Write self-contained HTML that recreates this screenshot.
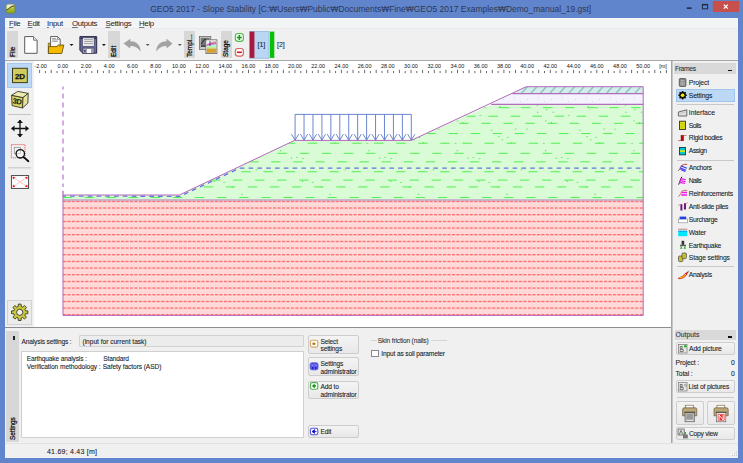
<!DOCTYPE html>
<html><head><meta charset="utf-8">
<style>
*{margin:0;padding:0;box-sizing:border-box}
html,body{width:743px;height:463px;overflow:hidden}
body{position:relative;background:#6185cc;font-family:"Liberation Sans",sans-serif;color:#000}
.a{position:absolute}
.t{position:absolute;white-space:nowrap;line-height:1;-webkit-text-stroke:0.08px currentColor;color:#141a28}
.u{text-decoration:underline;text-decoration-thickness:0.5px;text-underline-offset:0.8px;text-decoration-color:#777}
.tab{position:absolute;background:#d7d7d7}
.vt{position:absolute;white-space:nowrap;line-height:1;-webkit-text-stroke:0.2px currentColor;transform-origin:0 0;transform:rotate(-90deg)}
.btn{position:absolute;border:1px solid #cdcdcd;background:linear-gradient(#f4f4f4,#e8e8e8);border-radius:2px}
.sep{position:absolute;height:1px;background:#c8c8c8}
</style></head><body>

<!-- ===== TITLE BAR ===== -->
<div class="t" style="left:150.2px;top:4.9px;font-size:8.47px;color:#2c3854;-webkit-text-stroke:0">GEO5 2017 - Slope Stability [C:₩Users₩Public₩Documents₩Fine₩GEO5 2017 Examples₩Demo_manual_19.gst]</div>
<svg class="a" style="left:680px;top:0" width="63" height="18" viewBox="680 0 63 18">
<rect x="686.8" y="7.4" width="4.8" height="1.5" fill="#1e2840"/>
<rect x="702.4" y="4.4" width="5.2" height="4.4" fill="none" stroke="#1e2840" stroke-width="1"/>
<rect x="702.4" y="4" width="5.2" height="1.4" fill="#1e2840"/>
<rect x="712.8" y="1" width="26.2" height="11" fill="#c7504c"/>
<path d="M723.8 4.6 L727.8 8.6 M727.8 4.6 L723.8 8.6" stroke="#fff" stroke-width="1.3"/>
</svg>

<!-- ===== CLIENT ===== -->
<div class="a" style="left:5px;top:18px;width:733px;height:440px;background:#f0f0f0"></div>
<!-- menu bar -->
<div class="a" style="left:5px;top:18px;width:733px;height:10.4px;background:#f3f4f6;border-top:1px solid #f6f6f6"></div>
<div class="a" style="left:5px;top:28.4px;width:733px;height:1px;background:#ebebeb"></div>
<div class="t" style="left:9px;top:20.2px;font-size:7.8px;letter-spacing:-0.3px;-webkit-text-stroke:0;color:#1c1c1c"><span class="u">F</span>ile</div>
<div class="t" style="left:27.5px;top:20.2px;font-size:7.8px;letter-spacing:-0.3px;-webkit-text-stroke:0;color:#1c1c1c"><span class="u">E</span>dit</div>
<div class="t" style="left:47px;top:20.2px;font-size:7.8px;letter-spacing:-0.3px;-webkit-text-stroke:0;color:#1c1c1c"><span class="u">I</span>nput</div>
<div class="t" style="left:72px;top:20.2px;font-size:7.8px;letter-spacing:-0.3px;-webkit-text-stroke:0;color:#1c1c1c"><span class="u">O</span>utputs</div>
<div class="t" style="left:105.5px;top:20.2px;font-size:7.8px;letter-spacing:-0.3px;-webkit-text-stroke:0;color:#1c1c1c"><span class="u">S</span>ettings</div>
<div class="t" style="left:139px;top:20.2px;font-size:7.8px;letter-spacing:-0.3px;-webkit-text-stroke:0;color:#1c1c1c"><span class="u">H</span>elp</div>

<!-- toolbar -->
<div class="a" style="left:5px;top:60px;width:733px;height:1px;background:#a8a8a8"></div>
<div class="tab" style="left:6.5px;top:31px;width:11.5px;height:27px"></div>
<div class="vt" style="left:9.5px;top:57px;font-size:6.5px">File</div>
<div class="tab" style="left:108px;top:31px;width:11.5px;height:27px"></div>
<div class="vt" style="left:111px;top:57px;font-size:6.5px">Edit</div>
<div class="tab" style="left:184px;top:31px;width:11px;height:27px"></div>
<div class="vt" style="left:186.5px;top:57px;font-size:6.5px">Templ...</div>
<div class="tab" style="left:220.5px;top:31px;width:11.5px;height:27px"></div>
<div class="vt" style="left:223px;top:57px;font-size:6.5px">Stage</div>

<svg class="a" style="left:0;top:0" width="743" height="61" viewBox="0 0 743 61">
  <!-- app icon -->
  <defs><linearGradient id="ag" x1="0" y1="0" x2="0" y2="1"><stop offset="0" stop-color="#d8e050"/><stop offset="1" stop-color="#88a020"/></linearGradient></defs>
  <rect x="6.2" y="4.3" width="8.6" height="9" rx="2" fill="url(#ag)" stroke="#6a8028" stroke-width="0.6"/>
  <path d="M6.6 9.6 C9 9.2 10 5.8 14.4 5.6 V4.8 Q14.4 4.6 13 4.6 H8 Q6.6 4.6 6.6 6Z" fill="#ecead8"/>
  <path d="M6.6 9.8 C9 9.4 10 6 14.4 5.8" fill="none" stroke="#2a2a1a" stroke-width="0.9"/>
  <!-- new doc -->
  <path d="M24.7 36.6 H33.5 L37.1 40.2 V53.3 H24.7 Z" fill="#fff" stroke="#5a5a5a" stroke-width="1"/>
  <path d="M33.5 36.6 V40.2 H37.1" fill="#eee" stroke="#5a5a5a" stroke-width="0.8"/>
  <!-- open folder -->
  <path d="M48.3 43.2 H50.5 V53.5 H48.3Z" fill="#f0b400" stroke="#5a4a10" stroke-width="0.7"/>
  <path d="M50.6 36.5 H57.5 L60.2 39.3 V47.5 H50.6Z" fill="#fafafa" stroke="#555" stroke-width="0.9"/>
  <path d="M57.5 36.5 V39.3 H60.2" fill="none" stroke="#555" stroke-width="0.6"/>
  <path d="M52.2 38.5 H56 M52.2 39.9 H57.5 M52.2 41.4 H57.8" stroke="#888" stroke-width="0.8"/>
  <path d="M48.6 46.6 H57 L58 45 H63.8 L61.8 53.5 H48.4Z" fill="#f6bb00" stroke="#5a4a10" stroke-width="0.8"/>
  <path d="M59 46 H62.5" stroke="#a08030" stroke-width="0.8"/>
  <path d="M69.6 43.9 H73.5 L71.55 46Z" fill="#111"/>
  <!-- floppy -->
  <path d="M79.9 36.6 H96.7 V53.2 H82.8 L79.9 50.3Z" fill="#6b6b9c" stroke="#2a2a44" stroke-width="1"/>
  <rect x="82.7" y="37.9" width="11.4" height="8.3" fill="#f0f0f0" stroke="#3a3a50" stroke-width="0.5"/>
  <path d="M84 39.7 H93 M84 41.6 H93 M84 43.6 H93" stroke="#8a8a8a" stroke-width="0.8"/>
  <rect x="82.7" y="48" width="11.4" height="5.2" fill="#9a9ab0" stroke="#3a3a50" stroke-width="0.5"/>
  <rect x="86.9" y="49" width="4.1" height="4" fill="#fafafa"/>
  <circle cx="84.8" cy="51" r="1.1" fill="#50507a"/>
  <circle cx="81.6" cy="38.3" r="0.7" fill="#111"/>
  <circle cx="95.3" cy="38.3" r="0.7" fill="#111"/>
  <path d="M102 43.9 H105.8 L103.9 46Z" fill="#111"/>
  <!-- undo -->
  <path d="M123.6 43.6 L130.3 38.7 V41.3 C136 41.3 140.5 44.5 140.7 51.7 C138.5 47.8 135 46 130.3 46 V48.6 Z" fill="#a2a2a2"/>
  <path d="M145.7 43.9 H149.7 L147.7 46Z" fill="#5a5a5a"/>
  <!-- redo -->
  <path d="M172.5 43.6 L166.5 38.7 V41.3 C160.8 41.3 156.4 44.5 156.2 51.7 C158.4 47.8 161.8 46 166.5 46 V48.6 Z" fill="#a2a2a2"/>
  <path d="M177.9 43.9 H181.8 L179.85 46Z" fill="#5a5a5a"/>
  <!-- template -->
  <rect x="199.4" y="36.5" width="11.4" height="13" fill="#d8d8d8" stroke="#6a6a6a" stroke-width="0.8"/>
  <rect x="200.6" y="37.7" width="9" height="10.6" fill="#777"/>
  <path d="M201 44 L205 39 L208 41 M201 46 H208" stroke="#222" stroke-width="1" fill="none"/>
  <rect x="201" y="47.3" width="8" height="1" fill="#eee"/>
  <rect x="205.9" y="39.8" width="11" height="13.8" fill="#f4f4f4" stroke="#6a6a6a" stroke-width="0.8"/>
  <path d="M206.6 41 H216.2 V44 L211 46 L206.6 44.5Z" fill="#f0f0f0"/>
  <path d="M206.6 44.5 L211 42.5 L216.2 41.5 V45 L206.6 46Z" fill="#d860c8"/>
  <path d="M206.6 46 L211 45 L216.2 44 V46.5 H206.6Z" fill="#b0f0e8"/>
  <path d="M210 41 V46" stroke="#333" stroke-width="0.8"/>
  <path d="M213 41 L214.5 43.5" stroke="#e8d000" stroke-width="1"/>
  <rect x="206.6" y="46.5" width="9.6" height="2" fill="#b8f090"/>
  <rect x="206.6" y="48.5" width="9.6" height="4.4" fill="#d4a030"/>
  <!-- plus/minus -->
  <rect x="235.3" y="33.5" width="8.1" height="7.9" rx="2.6" fill="#f4fbf4" stroke="#4cbc4c" stroke-width="1.1"/>
  <path d="M236.9 37.45 H241.8 M239.35 35 V39.9" stroke="#14a014" stroke-width="1.6"/>
  <rect x="235.3" y="48.5" width="8.1" height="7.6" rx="2.6" fill="#fdf6f6" stroke="#d06464" stroke-width="1.1"/>
  <path d="M236.9 52.3 H241.8" stroke="#c82020" stroke-width="1.6"/>
  <!-- stage buttons -->
  <rect x="249.5" y="31.5" width="19.5" height="26.8" fill="#b9d6f2" stroke="#9cc0e6" stroke-width="1"/>
  <rect x="249.7" y="31.6" width="4.7" height="26.3" fill="#a9183e"/>
  <rect x="269.9" y="31.6" width="4.4" height="26.3" fill="#08c008"/>
</svg>
<div class="t" style="left:257.5px;top:40.7px;font-size:7px">[1]</div>
<div class="t" style="left:277px;top:40.7px;font-size:7px">[2]</div>

<!-- left toolbar -->
<div class="a" style="left:7px;top:63px;width:25px;height:24.5px;background:#bcd8f4;border:1px solid #a4c8ee"></div>
<svg class="a" style="left:0;top:61px" width="33" height="266" viewBox="0 61 33 266">
  <!-- 2D -->
  <rect x="12.5" y="68.3" width="14.8" height="14.3" fill="#cfcb5c" stroke="#3c3a20" stroke-width="1"/>
  <text x="20" y="78.8" font-family="Liberation Sans" font-weight="bold" font-size="8" text-anchor="middle" fill="#111" stroke="#111" stroke-width="0.25" letter-spacing="-0.1">2D</text>
  <!-- 3D cube -->
  <path d="M11.6 95.3 L23 97.6 L22.5 108 L12.1 105.6Z" fill="#d8d466" stroke="#3a3a22" stroke-width="0.9" stroke-linejoin="round"/>
  <path d="M11.6 95.3 L17.8 91.4 L28.2 93.4 L23 97.6Z" fill="#ececb4" stroke="#3a3a22" stroke-width="0.9" stroke-linejoin="round"/>
  <path d="M23 97.6 L28.2 93.4 L27.9 103 L22.5 108Z" fill="#e6e49c" stroke="#3a3a22" stroke-width="0.9" stroke-linejoin="round"/>
  <text x="17.1" y="104" font-family="Liberation Sans" font-weight="bold" font-size="7.6" text-anchor="middle" fill="#111" letter-spacing="-0.4" transform="rotate(8 17 101)">3D</text>
  <path d="M8 114.5 H31" stroke="#c4c4c4" stroke-width="1"/>
  <!-- move -->
  <path d="M20 120 V137 M11.5 128.5 H28.5" stroke="#111" stroke-width="1.3"/>
  <path d="M17 123 L20 119.8 L23 123Z M17 134 L20 137.2 L23 134Z M14.5 125.5 L11.3 128.5 L14.5 131.5Z M25.5 125.5 L28.7 128.5 L25.5 131.5Z" fill="#111"/>
  <!-- zoom -->
  <rect x="11.4" y="144.6" width="13.6" height="13.3" fill="none" stroke="#f03c3c" stroke-width="0.9" stroke-dasharray="1.1 0.9"/>
  <rect x="14.3" y="147.6" width="6" height="6" fill="#f4f4f4" stroke="#8a8a8a" stroke-width="0.7"/>
  <circle cx="20.3" cy="153.8" r="4.2" fill="#fff" fill-opacity="0.35" stroke="#111" stroke-width="1.3"/>
  <path d="M23.4 156.9 L28.4 161.2" stroke="#111" stroke-width="1.9" stroke-linecap="round"/>
  <path d="M8 167.8 H31" stroke="#c4c4c4" stroke-width="1"/>
  <!-- fit -->
  <rect x="11.4" y="175.6" width="17.2" height="12.8" fill="#fff" stroke="#3a3a3a" stroke-width="0.9"/>
  <path d="M13.5 177.5 L26.7 186.5 M26.7 177.5 L13.5 186.5" stroke="#f07070" stroke-width="0.7" stroke-dasharray="1 0.8"/>
  <path d="M12.6 176.8 L15.4 177.2 L13 179.4Z M27.6 176.8 L24.8 177.2 L27.2 179.4Z M12.6 187.2 L15.4 186.8 L13 184.6Z M27.6 187.2 L24.8 186.8 L27.2 184.6Z" fill="#f01818"/>
  <!-- gear button -->
  <rect x="7.5" y="300.5" width="24" height="24" fill="#ececec" stroke="#d2d2d2" stroke-width="1"/>
  <g transform="translate(19.7 312.3)">
    <path id="gear" d="M-1.54 -5.80 L-1.40 -8.18 L1.40 -8.18 L1.54 -5.80 L3.01 -5.19 L4.79 -6.78 L6.78 -4.79 L5.19 -3.01 L5.80 -1.54 L8.18 -1.40 L8.18 1.40 L5.80 1.54 L5.19 3.01 L6.78 4.79 L4.79 6.78 L3.01 5.19 L1.54 5.80 L1.40 8.18 L-1.40 8.18 L-1.54 5.80 L-3.01 5.19 L-4.79 6.78 L-6.78 4.79 L-5.19 3.01 L-5.80 1.54 L-8.18 1.40 L-8.18 -1.40 L-5.80 -1.54 L-5.19 -3.01 L-6.78 -4.79 L-4.79 -6.78 L-3.01 -5.19Z" stroke-linejoin="round" fill="#c8c840" stroke="#3a3a20" stroke-width="0.9"/>
    <circle r="3.1" fill="#f0f0f0" stroke="#3a3a20" stroke-width="0.9"/>
  </g>
</svg>

<!-- ===== CHART ===== -->
<div class="a" style="left:34px;top:61px;width:637px;height:266px;background:#fff"></div>
<svg class="a" style="left:33px;top:61px" width="638" height="266" viewBox="33 61 638 266">
  <defs>
    <pattern id="pk" patternUnits="userSpaceOnUse" x="62.9" y="200.8" width="4.4716" height="6.67">
      <rect x="0" y="0" width="3.1" height="1.4" fill="#ff5c5c"/>
      <rect x="0" y="1.6" width="3.1" height="0.8" fill="#ffeded"/>
    </pattern>
    <pattern id="gr" patternUnits="userSpaceOnUse" x="540" y="100" width="22.08" height="100"><rect x="3.00" y="7.10" width="9.3" height="1.05" fill="#55f055"/><rect x="14.70" y="15.70" width="9.3" height="1.05" fill="#55f055"/><rect x="-7.38" y="15.70" width="9.3" height="1.05" fill="#55f055"/><rect x="7.60" y="22.80" width="9.3" height="1.05" fill="#55f055"/><rect x="19.00" y="33.00" width="9.3" height="1.05" fill="#55f055"/><rect x="-3.08" y="33.00" width="9.3" height="1.05" fill="#55f055"/><rect x="10.80" y="42.70" width="9.3" height="1.05" fill="#55f055"/><rect x="2.60" y="52.80" width="9.3" height="1.05" fill="#55f055"/><rect x="18.30" y="61.30" width="9.3" height="1.05" fill="#55f055"/><rect x="-3.78" y="61.30" width="9.3" height="1.05" fill="#55f055"/><rect x="10.50" y="71.20" width="9.3" height="1.05" fill="#55f055"/><rect x="2.10" y="79.60" width="9.3" height="1.05" fill="#55f055"/><rect x="17.00" y="86.40" width="9.3" height="1.05" fill="#55f055"/><rect x="-5.08" y="86.40" width="9.3" height="1.05" fill="#55f055"/><rect x="8.30" y="97.00" width="9.3" height="1.05" fill="#55f055"/></pattern>
    <pattern id="gd" patternUnits="userSpaceOnUse" x="540" y="100" width="88.3" height="100"><rect x="28.2" y="14.9" width="1.1" height="1.1" fill="#44e044"/><rect x="56.6" y="7.2" width="1.1" height="1.1" fill="#44e044"/><rect x="46.6" y="36.2" width="1.1" height="1.1" fill="#44e044"/><rect x="5.0" y="50.2" width="1.1" height="1.1" fill="#44e044"/><rect x="3.3" y="42.9" width="1.1" height="1.1" fill="#44e044"/><rect x="6.1" y="9.0" width="1.1" height="1.1" fill="#44e044"/><rect x="36.9" y="81.9" width="1.1" height="1.1" fill="#44e044"/><rect x="10.8" y="22.1" width="1.1" height="1.1" fill="#44e044"/><rect x="54.6" y="93.8" width="1.1" height="1.1" fill="#44e044"/><rect x="50.2" y="39.3" width="1.1" height="1.1" fill="#44e044"/><rect x="84.9" y="4.6" width="1.1" height="1.1" fill="#44e044"/><rect x="74.7" y="28.7" width="1.1" height="1.1" fill="#44e044"/><rect x="12.6" y="11.7" width="1.1" height="1.1" fill="#44e044"/><rect x="26.8" y="80.8" width="1.1" height="1.1" fill="#44e044"/><rect x="15.7" y="57.6" width="1.1" height="1.1" fill="#44e044"/><rect x="55.6" y="36.9" width="1.1" height="1.1" fill="#44e044"/><rect x="47.7" y="6.2" width="1.1" height="1.1" fill="#44e044"/><rect x="5.2" y="20.4" width="1.1" height="1.1" fill="#44e044"/><rect x="59.2" y="42.3" width="1.1" height="1.1" fill="#44e044"/><rect x="27.3" y="58.0" width="1.1" height="1.1" fill="#44e044"/><rect x="39.4" y="29.7" width="1.1" height="1.1" fill="#44e044"/><rect x="69.1" y="69.2" width="1.1" height="1.1" fill="#44e044"/><rect x="21.2" y="56.9" width="1.1" height="1.1" fill="#44e044"/><rect x="45.7" y="86.6" width="1.1" height="1.1" fill="#44e044"/><rect x="63.5" y="28.5" width="1.1" height="1.1" fill="#44e044"/><rect x="85.3" y="11.7" width="1.1" height="1.1" fill="#44e044"/></pattern>
    <pattern id="cy" patternUnits="userSpaceOnUse" x="521.3" y="86.7" width="9.45" height="6.9">
      <path d="M-0.5 7.4 L6.5 -0.5" stroke="#2e9494" stroke-width="0.9"/>
    </pattern>
    <pattern id="lv" patternUnits="userSpaceOnUse" x="500" y="94" width="24" height="10">
      <rect x="3" y="5" width="0.9" height="0.9" fill="#ccccf4"/>
      <rect x="14" y="3" width="0.9" height="0.9" fill="#ccccf4"/>
      <rect x="20" y="7" width="0.9" height="0.9" fill="#d0d0f4"/>
    </pattern>
  </defs>
  <!-- ruler -->
  <g font-family="Liberation Sans" font-size="5.5" fill="#111" text-anchor="middle" id="rl"><text x="40.6" y="67.6">-2.00</text><text x="62.8" y="67.6">0.00</text><text x="86.0" y="67.6">2.00</text><text x="109.2" y="67.6">4.00</text><text x="132.4" y="67.6">6.00</text><text x="155.7" y="67.6">8.00</text><text x="178.9" y="67.6">10.00</text><text x="202.1" y="67.6">12.00</text><text x="225.3" y="67.6">14.00</text><text x="248.5" y="67.6">16.00</text><text x="271.7" y="67.6">18.00</text><text x="295.0" y="67.6">20.00</text><text x="318.2" y="67.6">22.00</text><text x="341.4" y="67.6">24.00</text><text x="364.6" y="67.6">26.00</text><text x="387.8" y="67.6">28.00</text><text x="411.0" y="67.6">30.00</text><text x="434.3" y="67.6">32.00</text><text x="457.5" y="67.6">34.00</text><text x="480.7" y="67.6">36.00</text><text x="503.9" y="67.6">38.00</text><text x="527.1" y="67.6">40.00</text><text x="550.3" y="67.6">42.00</text><text x="573.6" y="67.6">44.00</text><text x="596.8" y="67.6">46.00</text><text x="620.0" y="67.6">48.00</text><text x="643.2" y="67.6">50.00</text><text x="663" y="67.6">[m]</text></g>
  <g id="ticks" stroke="#444" stroke-width="0.8"><path d="M39.6 69.8V73.1M45.4 71V73.1M51.2 69.8V73.1M57.0 71V73.1M62.8 69.8V73.1M68.6 71V73.1M74.4 69.8V73.1M80.2 71V73.1M86.0 69.8V73.1M91.8 71V73.1M97.6 69.8V73.1M103.4 71V73.1M109.2 69.8V73.1M115.0 71V73.1M120.8 69.8V73.1M126.6 71V73.1M132.4 69.8V73.1M138.3 71V73.1M144.1 69.8V73.1M149.9 71V73.1M155.7 69.8V73.1M161.5 71V73.1M167.3 69.8V73.1M173.1 71V73.1M178.9 69.8V73.1M184.7 71V73.1M190.5 69.8V73.1M196.3 71V73.1M202.1 69.8V73.1M207.9 71V73.1M213.7 69.8V73.1M219.5 71V73.1M225.3 69.8V73.1M231.1 71V73.1M236.9 69.8V73.1M242.7 71V73.1M248.5 69.8V73.1M254.3 71V73.1M260.1 69.8V73.1M265.9 71V73.1M271.7 69.8V73.1M277.5 71V73.1M283.4 69.8V73.1M289.2 71V73.1M295.0 69.8V73.1M300.8 71V73.1M306.6 69.8V73.1M312.4 71V73.1M318.2 69.8V73.1M324.0 71V73.1M329.8 69.8V73.1M335.6 71V73.1M341.4 69.8V73.1M347.2 71V73.1M353.0 69.8V73.1M358.8 71V73.1M364.6 69.8V73.1M370.4 71V73.1M376.2 69.8V73.1M382.0 71V73.1M387.8 69.8V73.1M393.6 71V73.1M399.4 69.8V73.1M405.2 71V73.1M411.0 69.8V73.1M416.8 71V73.1M422.6 69.8V73.1M428.5 71V73.1M434.3 69.8V73.1M440.1 71V73.1M445.9 69.8V73.1M451.7 71V73.1M457.5 69.8V73.1M463.3 71V73.1M469.1 69.8V73.1M474.9 71V73.1M480.7 69.8V73.1M486.5 71V73.1M492.3 69.8V73.1M498.1 71V73.1M503.9 69.8V73.1M509.7 71V73.1M515.5 69.8V73.1M521.3 71V73.1M527.1 69.8V73.1M532.9 71V73.1M538.7 69.8V73.1M544.5 71V73.1M550.3 69.8V73.1M556.1 71V73.1M561.9 69.8V73.1M567.7 71V73.1M573.6 69.8V73.1M579.4 71V73.1M585.2 69.8V73.1M591.0 71V73.1M596.8 69.8V73.1M602.6 71V73.1M608.4 69.8V73.1M614.2 71V73.1M620.0 69.8V73.1M625.8 71V73.1M631.6 69.8V73.1M637.4 71V73.1M643.2 69.8V73.1M649.0 71V73.1M654.8 69.8V73.1M660.6 71V73.1M666.4 69.8V73.1"/></g>
  <!-- layers -->
  <rect x="62.8" y="200" width="580.4" height="115.5" fill="#ffd8d8"/>
  <rect x="62.8" y="200" width="580.4" height="115.5" fill="url(#pk)"/>
  <path d="M62.8 195 L179.4 195 L294.6 140.4 L411.3 140.4 L491.2 104.4 L643.2 104.4 L643.2 200 L62.8 200Z" fill="#d9fbd6"/>
  <path d="M62.8 195 L179.4 195 L294.6 140.4 L411.3 140.4 L491.2 104.4 L643.2 104.4 L643.2 200 L62.8 200Z" fill="url(#gr)"/>
  <path d="M62.8 195 L179.4 195 L294.6 140.4 L411.3 140.4 L491.2 104.4 L643.2 104.4 L643.2 200 L62.8 200Z" fill="url(#gd)"/>
  <path d="M491.2 104.4 L512.4 93.6 L643.2 93.6 L643.2 104.4Z" fill="#f3f2fd"/>
  <path d="M491.2 104.4 L512.4 93.6 L643.2 93.6 L643.2 104.4Z" fill="url(#lv)"/>
  <path d="M512.4 93.6 L526.2 86.7 L643.2 86.7 L643.2 93.6Z" fill="#d4ecea"/>
  <path d="M512.4 93.6 L526.2 86.7 L643.2 86.7 L643.2 93.6Z" fill="url(#cy)"/>
  <!-- water -->
  <path d="M62.8 196.1 L180 196.3 L239.6 168.2 L643.2 168.2" fill="none" stroke="#6474e0" stroke-width="1.3" stroke-dasharray="4.6 4.2" stroke-dashoffset="1.5"/>
  <!-- boundaries -->
  <path d="M62.8 200 H643.2" stroke="#c0a4c8" stroke-width="1.5"/>
  <path d="M491.2 104.4 H643.2 M512.4 93.6 H643.2" stroke="#b46cbc" stroke-width="1.1"/>
  <path d="M63 195 V315.4 H643.2 V86.7 H526.2 L411.3 140.4 H294.6 L179.4 195 H63" fill="none" stroke="#b468bc" stroke-width="1"/>
  <path d="M63 86.5 V187" stroke="#c890d8" stroke-width="1.5" stroke-dasharray="5 4" stroke-dashoffset="2"/>
  <path d="M63 190.8 V195.5" stroke="#c07ccc" stroke-width="1.5"/>
  <!-- surcharge -->
  <g stroke="#5a78c8" stroke-width="0.9" fill="none" id="sur"><path d="M295 114.4 H411.3"/><path d="M295.10 114.4V140.1M291.50 134.2L295.10 140.1L298.70 134.2M304.04 114.4V140.1M300.44 134.2L304.04 140.1L307.64 134.2M312.98 114.4V140.1M309.38 134.2L312.98 140.1L316.58 134.2M321.92 114.4V140.1M318.32 134.2L321.92 140.1L325.52 134.2M330.85 114.4V140.1M327.25 134.2L330.85 140.1L334.45 134.2M339.79 114.4V140.1M336.19 134.2L339.79 140.1L343.39 134.2M348.73 114.4V140.1M345.13 134.2L348.73 140.1L352.33 134.2M357.67 114.4V140.1M354.07 134.2L357.67 140.1L361.27 134.2M366.61 114.4V140.1M363.01 134.2L366.61 140.1L370.21 134.2M375.55 114.4V140.1M371.95 134.2L375.55 140.1L379.15 134.2M384.48 114.4V140.1M380.88 134.2L384.48 140.1L388.08 134.2M393.42 114.4V140.1M389.82 134.2L393.42 140.1L397.02 134.2M402.36 114.4V140.1M398.76 134.2L402.36 140.1L405.96 134.2M411.30 114.4V140.1M407.70 134.2L411.30 140.1L414.90 134.2"/></g>
</svg>

<!-- ===== DIVIDERS ===== -->
<div class="a" style="left:671px;top:61px;width:2px;height:382px;background:#c6c6c6;border-left:1px solid #a6a6a6"></div>
<div class="a" style="left:5px;top:327px;width:666px;height:1px;background:#8e8e8e"></div>
<div class="a" style="left:5px;top:442.5px;width:733px;height:1.6px;background:#e2e2e2"></div>

<!-- ===== RIGHT PANEL ===== -->
<div class="a" style="left:674px;top:63px;width:62px;height:10.5px;background:#d9d9d9"></div>
<div class="t" style="left:675px;top:65.8px;font-size:6.8px;letter-spacing:-0.4px;color:#2a3140">Frames</div>
<div class="a" style="left:728.3px;top:69.6px;width:4px;height:1.6px;background:#111"></div>
<div class="a" style="left:675.5px;top:89px;width:59.5px;height:12.7px;background:#bcd8f4;border:1px solid #9ec6ee"></div>
<div class="sep" style="left:677px;top:104px;width:57px"></div>
<div class="sep" style="left:677px;top:159.5px;width:57px"></div>
<div class="sep" style="left:677px;top:266px;width:57px"></div>


<div class="a" style="left:674.5px;top:329.7px;width:61.5px;height:10.4px;background:#d9d9d9"></div>
<div class="t" style="left:675.5px;top:332px;font-size:6.8px;color:#2a3140">Outputs</div>
<div class="a" style="left:728.3px;top:336.2px;width:4px;height:1.6px;background:#111"></div>
<div class="btn" style="left:675.6px;top:342.3px;width:59px;height:12.8px"></div>
<div class="t" style="left:689px;top:346px;font-size:6.8px;letter-spacing:-0.15px">Add picture</div>
<div class="t" style="left:675.5px;top:360px;font-size:6.8px;letter-spacing:-0.15px">Project :</div>
<div class="t" style="left:731px;top:360px;font-size:6.8px">0</div>
<div class="t" style="left:675.5px;top:370.8px;font-size:6.8px;letter-spacing:-0.15px">Total :</div>
<div class="t" style="left:731px;top:370.8px;font-size:6.8px">0</div>
<div class="btn" style="left:675.6px;top:380.4px;width:59px;height:12.8px"></div>
<div class="t" style="left:688.5px;top:384px;font-size:6.8px;letter-spacing:-0.2px">List of pictures</div>
<div class="sep" style="left:677px;top:397px;width:57px"></div>
<div class="btn" style="left:675.7px;top:401px;width:28px;height:24.4px"></div>
<div class="btn" style="left:707px;top:401px;width:27.9px;height:24.4px"></div>
<div class="btn" style="left:675.7px;top:427.4px;width:59.2px;height:12.3px"></div>
<div class="t" style="left:689px;top:430.5px;font-size:6.8px;letter-spacing:-0.32px">Copy view</div>

<!-- ===== BOTTOM PANEL ===== -->
<div class="tab" style="left:6.2px;top:331.2px;width:12.6px;height:110.4px"></div>
<div class="a" style="left:13px;top:336px;width:2px;height:3.5px;background:#222"></div>
<div class="vt" style="left:9.6px;top:440px;font-size:6.3px">Settings</div>
<div class="t" style="left:21.5px;top:338.5px;font-size:6.6px;letter-spacing:-0.15px">Analysis settings :</div>
<div class="a" style="left:79px;top:335px;width:225px;height:12.4px;background:#ececec;border:1px solid #d2d2d2;border-radius:1px"></div>
<div class="t" style="left:82.5px;top:338.5px;font-size:6.6px;letter-spacing:-0.02px">(input for current task)</div>
<div class="a" style="left:21.4px;top:350.6px;width:282.6px;height:87px;background:#fff;border:1px solid #d0d0d0"></div>
<div class="t" style="left:26.8px;top:356px;font-size:6.6px;letter-spacing:-0.15px">Earthquake analysis :</div>
<div class="t" style="left:103.3px;top:356px;font-size:6.6px;letter-spacing:-0.15px">Standard</div>
<div class="t" style="left:26.8px;top:364px;font-size:6.6px;letter-spacing:-0.07px">Verification methodology :</div>
<div class="t" style="left:102.8px;top:364px;font-size:6.6px;letter-spacing:-0.08px">Safety factors (ASD)</div>

<div class="btn" style="left:307.9px;top:334.7px;width:51.1px;height:19px"></div>
<div class="t" style="left:320.5px;top:337.5px;font-size:6.6px;letter-spacing:-0.15px;line-height:7.4px">Select<br>settings</div>
<div class="btn" style="left:307.9px;top:357.4px;width:51.1px;height:19px"></div>
<div class="t" style="left:320.5px;top:360.2px;font-size:6.6px;letter-spacing:-0.15px;line-height:7.4px">Settings<br>administrator</div>
<div class="btn" style="left:307.9px;top:380.5px;width:51.1px;height:18.6px"></div>
<div class="t" style="left:320.5px;top:383.2px;font-size:6.6px;letter-spacing:-0.15px;line-height:7.4px">Add to<br>administrator</div>
<div class="btn" style="left:307.9px;top:425px;width:51.1px;height:13px"></div>
<div class="t" style="left:320.5px;top:428.8px;font-size:6.6px;letter-spacing:-0.15px">Edit</div>

<svg class="a" style="left:305px;top:332px" width="60" height="110" viewBox="305 332 60 110">
<rect x="310.4" y="340.3" width="7.4" height="6.8" rx="1.8" fill="#fff" stroke="#d4a464" stroke-width="1.1"/>
<ellipse cx="313.9" cy="343.8" rx="1.6" ry="1.2" fill="#c07010"/>
<rect x="310.2" y="362.8" width="7.8" height="7" rx="1.8" fill="#5a5ae6" stroke="#4a4ad8" stroke-width="0.8"/>
<path d="M311.8 364.6 L313 366 M315.2 364.6 L316.4 366" stroke="#c8c8ff" stroke-width="0.7"/>
<rect x="312" y="367" width="1.2" height="2" fill="#1a1acc"/><rect x="315" y="367" width="1.2" height="2" fill="#1a1acc"/>
<rect x="310.4" y="382.6" width="7.4" height="6.6" rx="1.8" fill="#fff" stroke="#50b050" stroke-width="1.1"/>
<path d="M314.1 383.9 L316.3 385.9 L314.1 387.9 L311.9 385.9Z" fill="#109a10"/>
<rect x="310.4" y="428.2" width="7.4" height="6.6" rx="1.8" fill="#fff" stroke="#5555dd" stroke-width="1.1"/>
<path d="M312 431.5 L314.6 429.6 V433.4Z M314 431.5 H316.5" fill="#1010d0" stroke="#1010d0" stroke-width="0.8"/>
</svg>
<div class="a" style="left:371.4px;top:340.3px;width:5.5px;height:1px;background:#d4d4d4"></div>
<div class="t" style="left:377.8px;top:337.5px;font-size:6.6px;letter-spacing:-0.15px;color:#333">Skin friction (nails)</div>
<div class="a" style="left:430.7px;top:340.3px;width:16px;height:1px;background:#d4d4d4"></div>
<div class="a" style="left:371.4px;top:349.9px;width:7.2px;height:7px;background:#fff;border:1px solid #8a8a8a"></div>
<div class="t" style="left:381.3px;top:351px;font-size:6.6px;letter-spacing:-0.15px">Input as soil parameter</div>

<!-- status -->
<svg class="a" style="left:730px;top:449px" width="8" height="9" viewBox="730 449 8 9"><g fill="#c8c8c8"><rect x="736" y="451" width="1" height="1"/><rect x="734" y="453" width="1" height="1"/><rect x="736" y="453" width="1" height="1"/><rect x="732" y="455" width="1" height="1"/><rect x="734" y="455" width="1" height="1"/><rect x="736" y="455" width="1" height="1"/></g></svg>
<div class="t" style="left:47px;top:447.8px;font-size:7px;letter-spacing:0.23px">41.69; 4.43 [m]</div>

<div id="frames"><div class="t" style="left:688.8px;top:80.1px;font-size:6.8px;letter-spacing:-0.15px">Project</div><div class="t" style="left:688.8px;top:92.6px;font-size:6.8px;letter-spacing:-0.15px">Settings</div><div class="t" style="left:688.8px;top:109.9px;font-size:6.8px;letter-spacing:-0.040px">Interface</div><div class="t" style="left:688.8px;top:122.8px;font-size:6.8px;letter-spacing:-0.530px">Soils</div><div class="t" style="left:688.8px;top:135.4px;font-size:6.8px;letter-spacing:-0.325px">Rigid bodies</div><div class="t" style="left:688.8px;top:148.4px;font-size:6.8px;letter-spacing:-0.438px">Assign</div><div class="t" style="left:688.8px;top:165.2px;font-size:6.8px;letter-spacing:-0.323px">Anchors</div><div class="t" style="left:688.8px;top:178.2px;font-size:6.8px;letter-spacing:-0.590px">Nails</div><div class="t" style="left:688.8px;top:190.8px;font-size:6.8px;letter-spacing:-0.25px">Reinforcements</div><div class="t" style="left:688.8px;top:204.1px;font-size:6.8px;letter-spacing:-0.273px">Anti-slide piles</div><div class="t" style="left:688.8px;top:217.1px;font-size:6.8px;letter-spacing:-0.300px">Surcharge</div><div class="t" style="left:688.8px;top:229.7px;font-size:6.8px;letter-spacing:-0.15px">Water</div><div class="t" style="left:688.8px;top:242.5px;font-size:6.8px;letter-spacing:-0.248px">Earthquake</div><div class="t" style="left:688.8px;top:255.3px;font-size:6.8px;letter-spacing:-0.15px">Stage settings</div><div class="t" style="left:688.8px;top:272.2px;font-size:6.8px;letter-spacing:-0.287px">Analysis</div><svg class="a" style="left:673px;top:61px" width="65" height="382" viewBox="673 61 65 382">
<!-- project -->
<rect x="679.3" y="78.6" width="6.6" height="7.8" rx="0.8" fill="#8a8a8a" stroke="#4a4a4a" stroke-width="0.8"/>
<path d="M680.8 80.6 H684.4 M681 81.8 V85.6 M682.6 81.8 V85.6 M684.2 81.8 V85.6" stroke="#d0d0d0" stroke-width="0.6"/>
<!-- settings gear -->
<g transform="translate(682.6 95.2)">
<circle r="3.4" fill="#111"/>
<path d="M0 -4.2 V4.2 M-4.2 0 H4.2 M-3 -3 L3 3 M3 -3 L-3 3" stroke="#111" stroke-width="1.5"/>
<circle r="1.8" fill="#f2f200"/>
</g>
<!-- interface -->
<path d="M678.4 112 L686.8 109.8 V116 H678.4Z" fill="#e0e0e0" stroke="#5c5c5c" stroke-width="0.9"/>
<path d="M679.5 113.5 L685.5 112" stroke="#aaa" stroke-width="0.5"/>
<!-- soils -->
<rect x="679.5" y="121.2" width="6" height="8.3" fill="#dada10" stroke="#333" stroke-width="0.9"/>
<path d="M681 123.5 h1 M683.5 125 h1 M681.5 127 h1" stroke="#a0a000" stroke-width="0.8"/>
<!-- rigid bodies -->
<path d="M678 140.6 H681.2 M683.4 135.5 H686.5" stroke="#b04040" stroke-width="0.6"/>
<rect x="681" y="135.3" width="2.6" height="5.5" fill="#d00000" stroke="#600" stroke-width="0.4"/>
<!-- assign -->
<rect x="679.5" y="147.5" width="6" height="7.3" fill="#00c8d0" stroke="#0a4040" stroke-width="0.9"/>
<rect x="680" y="150.3" width="5" height="1.6" fill="#e8e800"/>
<!-- anchors -->
<path d="M678.2 170.6 C679.5 170 680.3 168.5 681.3 166.3 C682 164.8 683.5 164.3 687.2 164.3" fill="none" stroke="#b03a2a" stroke-width="0.9"/>
<path d="M680.8 165.8 L686.8 168.3 M679.8 167.8 L686 170.3 M680.6 169.6 L685.4 171.6" stroke="#3434f0" stroke-width="1.1"/>
<!-- nails -->
<path d="M678.6 184.6 L681.8 176.8" stroke="#222" stroke-width="1"/>
<path d="M680.2 178.6 L685.8 179.6 M679.6 180.6 L685.6 181.6 M679.2 182.4 L685 183.4" stroke="#e81ee8" stroke-width="1.3"/>
<!-- reinforcements -->
<path d="M678.3 196.6 C679.6 196 680.5 194 681.6 191.6 C682.2 190.5 683.5 190.3 687.2 190.3" fill="none" stroke="#c0504a" stroke-width="0.8"/>
<path d="M681.8 192.4 H687 M681.2 194.9 H687" stroke="#f414f4" stroke-width="1.5"/>
<!-- anti-slide piles -->
<path d="M678.2 205.6 L680.5 204.3 M686 203.3 L687.6 202.8" stroke="#c05050" stroke-width="0.6"/>
<path d="M681.4 204.3 V210.6 M685 203.2 V209.6" stroke="#6a0a7a" stroke-width="1.9"/>
<path d="M683.2 205 V210" stroke="#a8dca8" stroke-width="0.5"/>
<!-- surcharge -->
<rect x="678.5" y="219" width="8.8" height="3.8" fill="#fff" stroke="#888" stroke-width="0.6"/>
<rect x="679.6" y="216.6" width="6.6" height="2.6" fill="#2040e0"/>
<!-- water -->
<path d="M678.2 229.2 H687.3" stroke="#b05050" stroke-width="0.7"/>
<rect x="678.2" y="230.6" width="9.1" height="5.6" fill="#00e8ff"/>
<path d="M678.2 231.3 H687.3" stroke="#3050e0" stroke-width="0.8" stroke-dasharray="1 0.6"/>
<!-- earthquake -->
<rect x="681.6" y="240.8" width="2.6" height="4" fill="#333"/>
<path d="M680 245.3 H686" stroke="#222" stroke-width="0.9"/>
<path d="M680.5 246.2 L682 249 M682 246.2 L680.5 249 M684 246.2 L685.5 249 M685.5 246.2 L684 249" stroke="#20a020" stroke-width="0.8"/>
<!-- stage settings -->
<rect x="678.5" y="256" width="4.4" height="5.6" rx="1" fill="#c8c030" stroke="#444" stroke-width="0.7"/>
<rect x="682" y="253" width="4.4" height="5.6" rx="1" fill="#c8c030" stroke="#444" stroke-width="0.7"/>
<!-- analysis -->
<path d="M678 278.6 C681.5 279.5 686 277 687.3 273.5 L688.4 271.8 L687.2 272.6 C685.5 272.8 684.5 274 684 275 C682.5 276.5 680 277 678 278.6Z" fill="#e81818" stroke="#a01010" stroke-width="0.4"/>
<path d="M679.6 277.9 C682 277.6 684.6 276.2 685.8 274" stroke="#ffd000" stroke-width="1.1" fill="none"/>
<path d="M687.4 272.4 L688.6 270.8" stroke="#2a7a2a" stroke-width="0.8"/>
<!-- add picture -->
<rect x="678.5" y="344.5" width="8.5" height="8.5" fill="#e8e8e8" stroke="#777" stroke-width="0.7"/>
<path d="M680.2 346.5 H682.2 V348.5 H680.2Z M680.2 349.5 H683.2 V351.6 H680.2Z" fill="none" stroke="#333" stroke-width="0.6"/>
<circle cx="685.3" cy="346.2" r="1.3" fill="#10c010"/>
<!-- list of pictures -->
<rect x="678.5" y="382.5" width="8.5" height="8.5" fill="#e8e8e8" stroke="#777" stroke-width="0.7"/>
<path d="M680.2 384.5 H682.2 V386.5 H680.2Z M680.2 387.5 H683.2 V389.6 H680.2Z" fill="none" stroke="#333" stroke-width="0.6"/>
<path d="M684.8 384 V386.5 M686 384 V386.5" stroke="#555" stroke-width="0.5"/>
<!-- printers -->
<g id="pr1">
<rect x="685.6" y="405.2" width="7.8" height="3.2" fill="#fff" stroke="#6a5a30" stroke-width="0.6"/>
<path d="M682.6 409.5 Q682.6 407.8 684.2 407.8 H695.2 Q696.8 407.8 696.8 409.5 V415.8 H682.6Z" fill="#bba676" stroke="#5a4a28" stroke-width="0.6"/>
<path d="M684.5 412.4 H695" stroke="#3a3a3a" stroke-width="1.3"/>
<rect x="685" y="412.8" width="9.4" height="9" fill="#bdbdbd" stroke="#555" stroke-width="0.6"/>
<rect x="686.5" y="414" width="6.4" height="5.5" fill="#9a9a9a"/>
<path d="M686.5 420.5 H692.9" stroke="#eee" stroke-width="0.8"/>
</g>
<g transform="translate(31.4 0)">
<rect x="685.6" y="405.2" width="7.8" height="3.2" fill="#fff" stroke="#6a5a30" stroke-width="0.6"/>
<path d="M682.6 409.5 Q682.6 407.8 684.2 407.8 H695.2 Q696.8 407.8 696.8 409.5 V415.8 H682.6Z" fill="#bba676" stroke="#5a4a28" stroke-width="0.6"/>
<path d="M684.5 412.4 H695" stroke="#3a3a3a" stroke-width="1.3"/>
<rect x="685" y="412.8" width="9.4" height="9" fill="#f6f6f6" stroke="#555" stroke-width="0.6"/>
<path d="M686.3 414.3 H693.1 V420.6 H686.3Z" fill="#f02a2a"/>
<path d="M687.6 420 V415 L691.8 420 V415" stroke="#fff" stroke-width="1" fill="none"/>
</g>
<!-- copy view -->
<rect x="678" y="429" width="6.2" height="6" fill="#ddd" stroke="#555" stroke-width="0.7"/>
<path d="M679.3 434.5 L681 430.5 L682.8 434.5" stroke="#333" stroke-width="0.6" fill="none"/>
<rect x="684.5" y="432" width="1.5" height="2.5" fill="#20b020"/>
<rect x="683" y="434.5" width="4.8" height="3.9" fill="#777"/>
</svg></div>
</body></html>
